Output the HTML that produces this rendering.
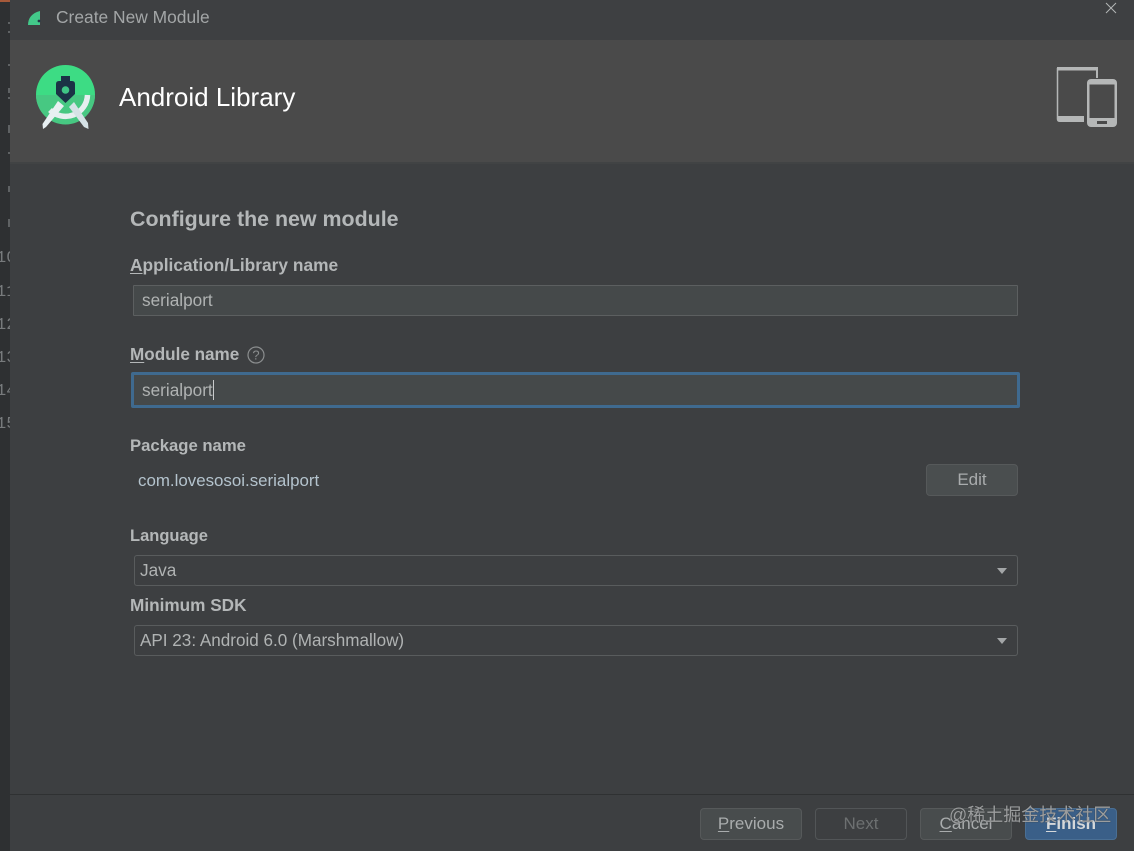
<!DOCTYPE html>
<html lang="en"><head><meta charset="utf-8"><title>Create New Module</title>
<style>
*{box-sizing:border-box}
html,body{margin:0;padding:0;background:#3d3f41}
#p{position:relative;width:1134px;height:851px;overflow:hidden;background:#3d3f41;font-family:"Liberation Sans",Arial,sans-serif}
.a{position:absolute}
.t{position:absolute;white-space:nowrap;line-height:20px;height:20px}
.l{font-weight:bold;color:#b4b7b8;font-size:17px}
.v{color:#b0b3b3;font-size:17.2px}
.f{position:absolute;left:133px;width:885px;height:31px;background:#45494a;border:1px solid #5c5f60;border-radius:1px}
.c{position:absolute;left:134px;width:884px;height:31px;background:#3d3f41;border:1px solid #595c5d;border-radius:3px}
.b{position:absolute;height:32px;border:1px solid #56595a;border-radius:4px;background:#484c4d;color:#a9acad;font-size:17px;line-height:30px;text-align:center}
u{text-underline-offset:2px}
.tri{position:absolute;left:997px;width:0;height:0;border-left:5.5px solid transparent;border-right:5.5px solid transparent;border-top:6px solid #a3a6a7}
.n{position:absolute;left:-4px;color:#777a7c;font:17px "Liberation Mono",monospace;width:14px;overflow:hidden;line-height:20px;height:20px;white-space:nowrap}
.s{position:absolute;left:8px;width:2px;height:2px;background:#5f6264}
</style></head><body><div id="p">

<div class="a" style="left:0;top:0;width:10px;height:851px;background:#2e3032"></div>
<div class="a" style="left:0;top:0;width:10px;height:2px;background:#a5593a"></div>
<div class="s" style="top:22px"></div>
<div class="s" style="top:31px"></div>
<div class="s" style="top:64px"></div>
<div class="s" style="top:88px;height:5px"></div>
<div class="s" style="top:97px"></div>
<div class="s" style="top:125px;height:8px"></div>
<div class="s" style="top:152px"></div>
<div class="s" style="top:186px;height:6px"></div>
<div class="s" style="top:219px;height:8px"></div>
<div class="n" style="top:249px">10</div>
<div class="n" style="top:283px">11</div>
<div class="n" style="top:316px">12</div>
<div class="n" style="top:349px">13</div>
<div class="n" style="top:382px">14</div>
<div class="n" style="top:415px">15</div>

<div class="a" style="left:10px;top:0;width:1124px;height:40px;background:#3e4042"></div>
<svg class="a" style="left:27px;top:10px" width="16" height="16" viewBox="0 0 16 16"><path d="M1 15C1 8 5 3 13 1V15Z" fill="#43c98a"/><circle cx="12" cy="11" r="1.400" fill="#24384a"/></svg>
<div class="t" style="left:56px;top:7px;color:#a3a6a7;font-size:17.400px">Create New Module</div>
<svg class="a" style="left:1105px;top:2px" width="12" height="12" viewBox="0 0 12 12"><path d="M1 1L11 11M11 1L1 11" stroke="#b4b6b7" stroke-width="1"/></svg>

<div class="a" style="left:10px;top:40px;width:1124px;height:123px;background:#4a4a4a"></div>
<div class="a" style="left:10px;top:162px;width:1124px;height:2px;background:#414344"></div>

<svg class="a" style="left:36px;top:65px" width="60" height="66" viewBox="0 0 60 66">
<circle cx="29.500" cy="29.500" r="29.500" fill="#3ddc84"/>
<path d="M0 30H59A29.500 29.500 0 0 1 0 30Z" fill="#47c882"/>
<path d="M14 45A22 22 0 0 0 51.500 30" fill="none" stroke="#e6eff0" stroke-width="5.500"/>
<path d="M22 36L28 41L10 62L7 64L6.500 59Z" fill="#e8f0f2"/>
<path d="M38 37L33 42L48 62L52.500 64L52 58Z" fill="#d5e2e6"/>
<path d="M25 11V16H23Q20 16 20 19V29L29.500 38L39 29V19Q39 16 36 16H34V11Z" fill="#1b3346"/>
<circle cx="29.500" cy="25" r="3.800" fill="#3fc585"/>
</svg>
<div class="t" style="left:119px;top:83px;height:28px;line-height:28px;color:#fff;font-size:26px">Android Library</div>

<svg class="a" style="left:1056px;top:66px" width="62" height="62" viewBox="0 0 62 62">
<path d="M1.500 2V53Q1.500 55 3.500 55H28" fill="none" stroke="#b5b7b7" stroke-width="1.500"/>
<path d="M41 2V12" fill="none" stroke="#b5b7b7" stroke-width="2"/>
<path d="M1 50H28V56H4Q1 56 1 53Z" fill="#b5b7b7"/>
<path d="M1 1H42V4.500H1Z" fill="#b5b7b7"/>
<rect x="31" y="13" width="30" height="48" rx="4" fill="#b5b7b7"/>
<rect x="33.500" y="18.500" width="25" height="33.500" fill="#4a4a4a"/>
<rect x="41" y="55" width="10" height="3" fill="#4a4a4a"/>
</svg>

<div class="t" style="left:130px;top:207px;height:24px;line-height:24px;font-weight:bold;color:#b4b7b8;font-size:21.400px">Configure the new module</div>

<div class="t l" style="left:130px;top:255px;font-size:17.350px"><u>A</u>pplication/Library name</div>
<div class="f" style="top:285px"></div>
<div class="t v" style="left:142px;top:290px">serialport</div>

<div class="t l" style="left:130px;top:345px;font-size:17.100px"><u>M</u>odule name</div>
<svg class="a" style="left:247px;top:346px" width="18" height="18" viewBox="0 0 18 18"><circle cx="9" cy="9" r="8" fill="none" stroke="#8b8e8f" stroke-width="1.200"/><text x="9" y="13.500" text-anchor="middle" font-size="13" fill="#8b8e8f" font-family="Liberation Sans">?</text></svg>
<div class="f" style="left:131px;top:372px;width:889px;height:36px;border:3px solid #3f6a8f;border-radius:2px"></div>
<div class="t v" style="left:142px;top:380px">serialport</div>
<div class="a" style="left:213px;top:380px;width:1px;height:20px;background:#c8cacb"></div>

<div class="t l" style="left:130px;top:436px;font-size:16.700px">Package name</div>
<div class="t" style="left:138px;top:471px;color:#b4c3cd;font-size:16.900px">com.lovesosoi.serialport</div>
<div class="b" style="left:926px;top:464px;width:92px;background:#4a4e4f">Edit</div>

<div class="t l" style="left:130px;top:526px;font-size:16.500px">Language</div>
<div class="c" style="top:555px"></div>
<div class="t v" style="left:140px;top:560px">Java</div>
<div class="tri" style="top:568px"></div>

<div class="t l" style="left:130px;top:595px;font-size:17.200px">Minimum SDK</div>
<div class="c" style="top:625px"></div>
<div class="t v" style="left:140px;top:631px;font-size:17.100px">API 23: Android 6.0 (Marshmallow)</div>
<div class="tri" style="top:638px"></div>

<div class="a" style="left:10px;top:794px;width:1124px;height:1px;background:#2f3132"></div>
<div class="b" style="left:700px;top:808px;width:102px"><u>P</u>revious</div>
<div class="b" style="left:815px;top:808px;width:92px;background:#3d3f41;color:#6d7071;border-color:#525557">Next</div>
<div class="b" style="left:920px;top:808px;width:92px"><u>C</u>ancel</div>
<div class="b" style="left:1025px;top:808px;width:92px;background:#3a5f88;border-color:#4a6f94;color:#d5d8da;font-weight:bold"><u>F</u>inish</div>
<div class="t" style="left:949px;top:805px;color:#9b9d9e;font-size:18px;font-family:'Liberation Sans','Noto Sans CJK SC',sans-serif;text-shadow:0 0 1px #333">@稀土掘金技术社区</div>
</div></body></html>
